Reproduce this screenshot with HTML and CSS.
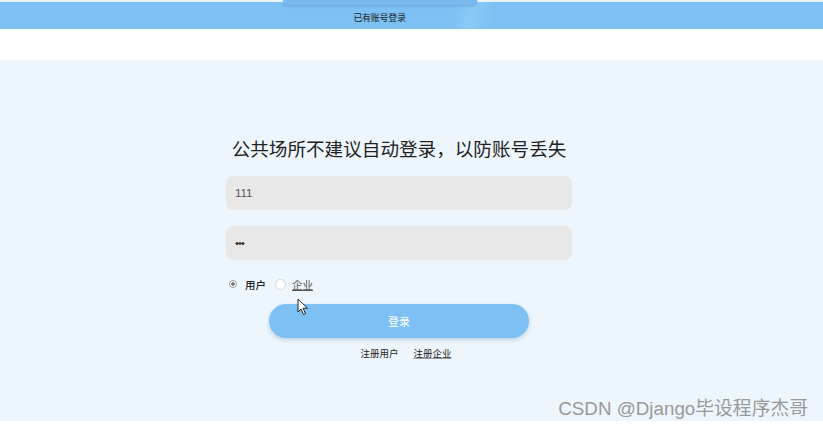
FILE: index.html
```html
<!DOCTYPE html>
<html lang="zh-CN">
<head>
  <meta charset="UTF-8">
  <meta name="viewport" content="width=device-width, initial-scale=1.0">
  <title>登录</title>
  <link rel="stylesheet" href="styles.css">
</head>
<body>
  <!-- 顶部蓝色条 -->
  <div class="top-bar">
    <div class="top-tab"></div>
    <span class="top-text">已有账号登录</span>
  </div>
  <div class="gap-band"></div>

  <div class="main">
    <h2 class="title">公共场所不建议自动登录，以防账号丢失</h2>
    <div class="input-box">111</div>
    <div class="input-box pwd">•••</div>

    <div class="radio-row">
      <span class="radio checked"></span>
      <span class="radio-label">用户</span>
      <span class="radio"></span>
      <span class="radio-label link">企业</span>
    </div>

    <button class="login-btn">登录</button>

    <div class="links">
      <span>注册用户</span>
      <span class="underline">注册企业</span>
    </div>

    <!-- 鼠标指针 -->
    <svg class="cursor" width="12" height="18" viewBox="0 0 12 18">
      <path d="M1 1 L1 14 L4 11 L6.5 16.5 L8.5 15.5 L6 10.2 L10.5 10.2 Z" fill="#fff" stroke="#222" stroke-width="1"/>
    </svg>

    <div class="watermark">CSDN @Django毕设程序杰哥</div>
  </div>
  <div class="bottom-band"></div>
</body>
</html>
```
FILE: styles.css
```css
/* 页面整体 */
body {
  margin: 0;
  padding: 0;
  font-family: "Noto Sans CJK SC", "Liberation Sans", sans-serif;
  background: #fff;
  width: 823px;
  height: 427px;
  overflow: hidden;
}

/* 顶部蓝色条 */
.top-bar {
  position: relative;
  height: 29px;
  background: linear-gradient(100deg, #7cc0f4 0%, #7cc0f4 55%, #8acaf6 57%, #7cc0f4 60%, #7cc0f4 100%);
  border-top: 2px solid #e9f3fb;
  box-sizing: border-box;
  display: flex;
  justify-content: center;
  align-items: center;
}

.top-tab {
  position: absolute;
  left: 283px;
  top: -2px;
  width: 194px;
  height: 5px;
  background: #7ab9ed;
  border-radius: 0 0 4px 4px;
  box-shadow: 0 1px 3px rgba(60, 110, 160, 0.35);
}

.top-text {
  font-size: 9px;
  color: #222;
  margin-left: -64px;
  margin-top: 3px;
  letter-spacing: -0.3px;
}

.gap-band {
  height: 31px;
  background: #fff;
}

/* 主区域，内容略偏左 */
.main {
  position: relative;
  height: 361px;
  background: #eef6fd;
  display: flex;
  flex-direction: column;
  align-items: center;
  padding-top: 74px;
  padding-right: 25px;
  box-sizing: border-box;
}

.title {
  margin: 0 0 14px 0;
  font-size: 18.6px;
  font-weight: normal;
  color: #222;
  line-height: 28px;
}

.input-box {
  width: 346px;
  height: 34px;
  box-sizing: border-box;
  background: #e8e8e8;
  border-radius: 7px;
  margin-bottom: 16px;
  padding-left: 9px;
  font-family: "Liberation Sans", sans-serif;
  font-size: 11.5px;
  line-height: 34px;
  color: #555;
}

.input-box.pwd {
  font-size: 11px;
  color: #333;
  letter-spacing: -0.8px;
}

/* 单选框 */
.radio-row {
  width: 346px;
  display: flex;
  align-items: center;
  padding-left: 2px;
  box-sizing: border-box;
  height: 16px;
}

.radio {
  width: 11px;
  height: 11px;
  border: 1px solid #d6d6d6;
  border-radius: 50%;
  background: #fff;
  box-sizing: border-box;
  margin-right: 6px;
  margin-left: 1px;
}

.radio.checked {
  width: 8px;
  height: 8px;
  border-color: #999;
  background: radial-gradient(circle, #777 0 1.5px, #fff 2px);
  margin-right: 8px;
}

.radio-label {
  font-size: 10.5px;
  font-weight: 500;
  color: #222;
  margin-right: 8px;
}

.radio-label.link {
  font-weight: normal;
  color: #555;
  text-decoration: underline;
}

/* 登录按钮 */
.login-btn {
  margin-top: 12px;
  width: 260px;
  height: 34px;
  border: none;
  border-radius: 17px;
  background: #7cc0f4;
  color: #fff;
  font-family: inherit;
  font-size: 11px;
  box-shadow: 0 2px 4px rgba(80, 120, 160, 0.3);
}

.links {
  margin-top: 8px;
  display: flex;
  gap: 15px;
  font-size: 9.5px;
  color: #222;
  margin-left: 14px;
}

.underline {
  text-decoration: underline;
  text-decoration-color: #999;
}

.cursor {
  position: absolute;
  left: 297px;
  top: 238px;
}

.watermark {
  position: absolute;
  right: 15px;
  bottom: 1px;
  font-size: 18.8px;
  color: #999;
  font-family: "Liberation Sans", "Noto Sans CJK SC", sans-serif;
}

.bottom-band {
  height: 6px;
  background: #fff;
}
```
